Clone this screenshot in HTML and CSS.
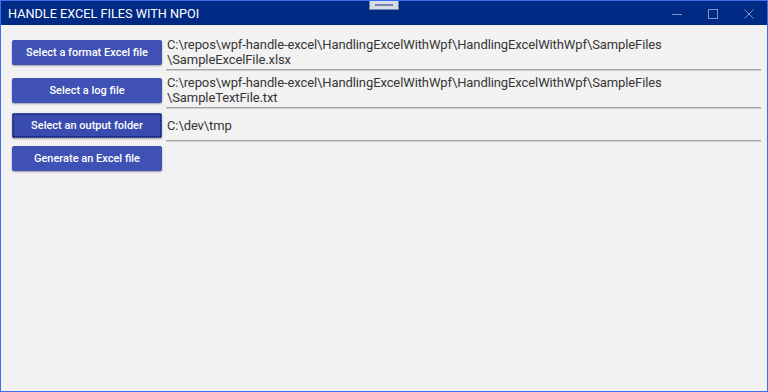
FILE: index.html
```html
<!DOCTYPE html>
<html>
<head>
<meta charset="utf-8">
<link rel="stylesheet" href="styles.css">
</head>
<body>
<div class="window">
  <div class="titlebar">
    <div class="title">HANDLE EXCEL FILES WITH NPOI</div>
    <div class="controls">
      <span class="ctl"><svg width="10" height="10" viewBox="0 0 10 10"><path d="M0 5.5h10" stroke="currentColor" stroke-width="1"/></svg></span>
      <span class="ctl"><svg width="10" height="10" viewBox="0 0 10 10"><rect x="0.5" y="0.5" width="9" height="9" fill="none" stroke="currentColor" stroke-width="1"/></svg></span>
      <span class="ctl"><svg width="10" height="10" viewBox="0 0 10 10"><path d="M0.5 0.5L9.5 9.5M9.5 0.5L0.5 9.5" stroke="currentColor" stroke-width="1"/></svg></span>
    </div>
    <div class="grip"><span class="grip-bar"></span></div>
  </div>
  <div class="content">
    <button class="btn">Select a format Excel file</button>
    <div class="path">C:\repos\wpf-handle-excel\HandlingExcelWithWpf\HandlingExcelWithWpf\SampleFiles<br>\SampleExcelFile.xlsx</div>
    <button class="btn">Select a log file</button>
    <div class="path">C:\repos\wpf-handle-excel\HandlingExcelWithWpf\HandlingExcelWithWpf\SampleFiles<br>\SampleTextFile.txt</div>
    <button class="btn focused">Select an output folder</button>
    <div class="path">C:\dev\tmp</div>
    <button class="btn">Generate an Excel file</button>
    <div class="empty"></div>
  </div>
</div>
</body>
</html>
```

FILE: styles.css
```css
html, body {
  margin: 0;
  padding: 0;
  width: 768px;
  height: 392px;
  overflow: hidden;
}
body {
  font-family: Roboto, "Noto Sans", sans-serif;
  background: #f2f2f2;
}
.window {
  box-sizing: border-box;
  width: 768px;
  height: 392px;
  border: 1px solid #3d6ef2;
  background: #f2f2f2;
  display: flex;
  flex-direction: column;
  position: relative;
}
.titlebar {
  height: 24px;
  background: #012a85;
  display: flex;
  align-items: center;
  justify-content: space-between;
  padding-left: 7px;
  position: relative;
}
.title {
  color: #ffffff;
  font-size: 12.7px;
  letter-spacing: 0;
  padding-top: 1px;
}
.controls {
  display: flex;
  height: 100%;
}
.ctl {
  width: 36px;
  display: flex;
  align-items: center;
  justify-content: center;
  color: #7e93c6;
  padding-top: 2px;
}
.grip {
  position: absolute;
  left: 368px;
  top: 0;
  width: 28px;
  height: 8px;
  background: #d7dbe7;
  border: 1px solid #7b86ad;
  border-top: none;
  display: flex;
  align-items: center;
  justify-content: center;
}
.grip-bar {
  width: 18px;
  height: 2px;
  background: #7c84a4;
}
.content {
  display: grid;
  grid-template-columns: 150px 1fr;
  column-gap: 4px;
  padding: 8px 6px 0 11px;
  align-content: start;
}
.btn {
  align-self: center;
  height: 25px;
  margin: 4px 0;
  padding: 0;
  border: none;
  border-radius: 2px;
  background: #3f51b5;
  color: #ffffff;
  font-family: Roboto, "Noto Sans", sans-serif;
  font-weight: 500;
  font-size: 11px;
  box-shadow: 0 1px 2px rgba(0, 0, 0, 0.35);
}
.btn.focused {
  outline: 1px dotted #0d1540;
  outline-offset: -2px;
  background: #3a4bb0;
}
.path {
  display: flex;
  align-items: center;
  padding: 4px 0 2px 1px;
  font-size: 13px;
  letter-spacing: -0.1px;
  line-height: 15px;
  color: #363636;
  border-bottom: 1px solid #a6a6a6;
  box-shadow: 0 1px 0 #cfcfcf;
  margin-bottom: 1px;
}
```
